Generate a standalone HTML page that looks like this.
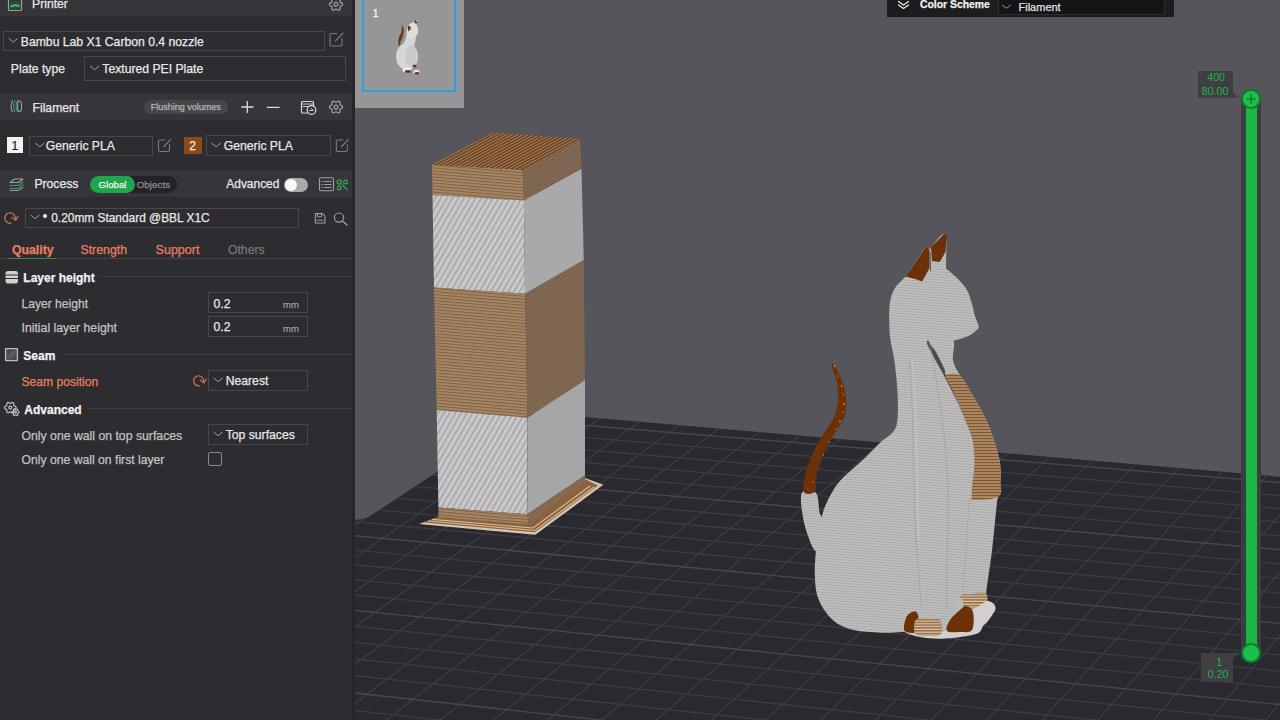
<!DOCTYPE html>
<html><head><meta charset="utf-8"><style>
html,body{margin:0;padding:0;width:1280px;height:720px;overflow:hidden;background:#56555b;position:relative}
.t{position:absolute;white-space:pre;line-height:1.15;font-family:"Liberation Sans", sans-serif;-webkit-text-stroke:0.25px currentColor}
</style></head><body>
<div style="position:absolute;left:355px;top:0px;width:925px;height:720px;background:#56555b"></div>
<svg style="position:absolute;left:0;top:0" width="1280" height="720" viewBox="0 0 1280 720">
<defs><clipPath id="floorclip"><path d="M355,520 L362,519 Q366,518.5 368.25,517.3 L437,472 L530,414 L585.2,417 L1280,476.8 L1280,720 L355,720 Z"/></clipPath></defs>
<path d="M355,520 L362,519 Q366,518.5 368.25,517.3 L437,472 L530,414 L585.2,417 L1280,476.8 L1280,720 L355,720 Z" fill="#2a292f"/>
<g clip-path="url(#floorclip)" stroke-linecap="butt">
<line x1="189.9" y1="381.4" x2="-817.0" y2="958.1" stroke="#3d3c43" stroke-width="1.3"/>
<line x1="226.3" y1="384.3" x2="-770.7" y2="965.2" stroke="#3d3c43" stroke-width="1.3"/>
<line x1="262.9" y1="387.3" x2="-724.0" y2="972.3" stroke="#3d3c43" stroke-width="1.3"/>
<line x1="299.8" y1="390.3" x2="-676.7" y2="979.5" stroke="#3d3c43" stroke-width="1.3"/>
<line x1="337.0" y1="393.3" x2="-629.0" y2="986.8" stroke="#3d3c43" stroke-width="1.3"/>
<line x1="374.5" y1="396.3" x2="-580.8" y2="994.2" stroke="#3d3c43" stroke-width="1.3"/>
<line x1="412.2" y1="399.4" x2="-532.1" y2="1001.6" stroke="#3d3c43" stroke-width="1.3"/>
<line x1="450.2" y1="402.5" x2="-482.8" y2="1009.1" stroke="#3d3c43" stroke-width="1.3"/>
<line x1="488.4" y1="405.6" x2="-433.1" y2="1016.7" stroke="#3d3c43" stroke-width="1.3"/>
<line x1="527.0" y1="408.7" x2="-382.8" y2="1024.4" stroke="#3d3c43" stroke-width="1.3"/>
<line x1="565.8" y1="411.9" x2="-332.1" y2="1032.1" stroke="#3d3c43" stroke-width="1.3"/>
<line x1="604.9" y1="415.0" x2="-280.7" y2="1040.0" stroke="#3d3c43" stroke-width="1.3"/>
<line x1="644.4" y1="418.2" x2="-228.9" y2="1047.9" stroke="#3d3c43" stroke-width="1.3"/>
<line x1="684.1" y1="421.5" x2="-176.4" y2="1055.9" stroke="#3d3c43" stroke-width="1.3"/>
<line x1="724.1" y1="424.7" x2="-123.5" y2="1064.0" stroke="#3d3c43" stroke-width="1.3"/>
<line x1="764.4" y1="428.0" x2="-69.9" y2="1072.2" stroke="#3d3c43" stroke-width="1.3"/>
<line x1="805.0" y1="431.3" x2="-15.7" y2="1080.4" stroke="#3d3c43" stroke-width="1.3"/>
<line x1="845.9" y1="434.6" x2="39.0" y2="1088.8" stroke="#3d3c43" stroke-width="1.3"/>
<line x1="887.1" y1="437.9" x2="94.3" y2="1097.2" stroke="#3d3c43" stroke-width="1.3"/>
<line x1="928.6" y1="441.3" x2="150.3" y2="1105.8" stroke="#3d3c43" stroke-width="1.3"/>
<line x1="970.5" y1="444.7" x2="206.8" y2="1114.4" stroke="#3d3c43" stroke-width="1.3"/>
<line x1="1012.7" y1="448.1" x2="264.0" y2="1123.1" stroke="#3d3c43" stroke-width="1.3"/>
<line x1="1055.2" y1="451.6" x2="321.9" y2="1132.0" stroke="#3d3c43" stroke-width="1.3"/>
<line x1="1098.0" y1="455.1" x2="380.4" y2="1140.9" stroke="#3d3c43" stroke-width="1.3"/>
<line x1="1141.1" y1="458.6" x2="439.6" y2="1149.9" stroke="#3d3c43" stroke-width="1.3"/>
<line x1="1184.6" y1="462.1" x2="499.4" y2="1159.1" stroke="#3d3c43" stroke-width="1.3"/>
<line x1="1228.5" y1="465.6" x2="559.9" y2="1168.3" stroke="#3d3c43" stroke-width="1.3"/>
<line x1="1272.6" y1="469.2" x2="621.2" y2="1177.7" stroke="#3d3c43" stroke-width="1.3"/>
<line x1="1317.2" y1="472.8" x2="683.1" y2="1187.1" stroke="#3d3c43" stroke-width="1.3"/>
<line x1="1362.0" y1="476.5" x2="745.8" y2="1196.7" stroke="#3d3c43" stroke-width="1.3"/>
<line x1="1407.3" y1="480.2" x2="809.2" y2="1206.4" stroke="#3d3c43" stroke-width="1.3"/>
<line x1="1452.9" y1="483.9" x2="873.3" y2="1216.1" stroke="#3d3c43" stroke-width="1.3"/>
<line x1="1498.8" y1="487.6" x2="938.3" y2="1226.1" stroke="#3d3c43" stroke-width="1.3"/>
<line x1="1545.2" y1="491.3" x2="1004.0" y2="1236.1" stroke="#3d3c43" stroke-width="1.3"/>
<line x1="1591.9" y1="495.1" x2="1070.5" y2="1246.2" stroke="#3d3c43" stroke-width="1.3"/>
<line x1="1639.0" y1="499.0" x2="1137.7" y2="1256.5" stroke="#3d3c43" stroke-width="1.3"/>
<line x1="1686.4" y1="502.8" x2="1205.9" y2="1266.9" stroke="#3d3c43" stroke-width="1.3"/>
<line x1="1734.3" y1="506.7" x2="1274.8" y2="1277.4" stroke="#3d3c43" stroke-width="1.3"/>
<line x1="1782.5" y1="510.6" x2="1344.6" y2="1288.1" stroke="#3d3c43" stroke-width="1.3"/>
<line x1="1831.2" y1="514.5" x2="1415.3" y2="1298.9" stroke="#3d3c43" stroke-width="1.3"/>
<line x1="1880.2" y1="518.5" x2="1486.9" y2="1309.8" stroke="#3d3c43" stroke-width="1.3"/>
<line x1="1929.7" y1="522.5" x2="1559.3" y2="1320.9" stroke="#3d3c43" stroke-width="1.3"/>
<line x1="172.3" y1="391.4" x2="2500.8" y2="583.0" stroke="#4a4950" stroke-width="1.3"/>
<line x1="154.5" y1="401.6" x2="2499.5" y2="597.2" stroke="#3d3c43" stroke-width="1.3"/>
<line x1="136.5" y1="411.9" x2="2498.1" y2="611.7" stroke="#3d3c43" stroke-width="1.3"/>
<line x1="118.2" y1="422.4" x2="2496.8" y2="626.5" stroke="#3d3c43" stroke-width="1.3"/>
<line x1="99.6" y1="433.1" x2="2495.4" y2="641.5" stroke="#3d3c43" stroke-width="1.3"/>
<line x1="80.7" y1="443.9" x2="2494.0" y2="656.8" stroke="#4a4950" stroke-width="1.3"/>
<line x1="61.6" y1="454.9" x2="2492.6" y2="672.4" stroke="#3d3c43" stroke-width="1.3"/>
<line x1="42.1" y1="466.0" x2="2491.1" y2="688.2" stroke="#3d3c43" stroke-width="1.3"/>
<line x1="22.4" y1="477.3" x2="2489.6" y2="704.4" stroke="#3d3c43" stroke-width="1.3"/>
<line x1="2.4" y1="488.8" x2="2488.1" y2="720.9" stroke="#3d3c43" stroke-width="1.3"/>
<line x1="-18.0" y1="500.4" x2="2486.6" y2="737.7" stroke="#4a4950" stroke-width="1.3"/>
<line x1="-38.6" y1="512.2" x2="2485.0" y2="754.8" stroke="#3d3c43" stroke-width="1.3"/>
<line x1="-59.6" y1="524.3" x2="2483.4" y2="772.3" stroke="#3d3c43" stroke-width="1.3"/>
<line x1="-80.9" y1="536.5" x2="2481.8" y2="790.1" stroke="#3d3c43" stroke-width="1.3"/>
<line x1="-102.5" y1="548.9" x2="2480.1" y2="808.2" stroke="#3d3c43" stroke-width="1.3"/>
<line x1="-124.5" y1="561.5" x2="2478.4" y2="826.7" stroke="#4a4950" stroke-width="1.3"/>
<line x1="-146.9" y1="574.3" x2="2476.7" y2="845.6" stroke="#3d3c43" stroke-width="1.3"/>
<line x1="-169.6" y1="587.3" x2="2474.9" y2="864.9" stroke="#3d3c43" stroke-width="1.3"/>
<line x1="-192.7" y1="600.5" x2="2473.1" y2="884.6" stroke="#3d3c43" stroke-width="1.3"/>
<line x1="-216.1" y1="613.9" x2="2471.3" y2="904.7" stroke="#3d3c43" stroke-width="1.3"/>
<line x1="-240.0" y1="627.6" x2="2469.4" y2="925.3" stroke="#4a4950" stroke-width="1.3"/>
<line x1="-264.2" y1="641.5" x2="2467.5" y2="946.2" stroke="#3d3c43" stroke-width="1.3"/>
<line x1="-288.9" y1="655.6" x2="2465.5" y2="967.7" stroke="#3d3c43" stroke-width="1.3"/>
<line x1="-314.0" y1="670.0" x2="2463.5" y2="989.6" stroke="#3d3c43" stroke-width="1.3"/>
<line x1="-339.5" y1="684.6" x2="2461.4" y2="1012.0" stroke="#3d3c43" stroke-width="1.3"/>
<line x1="-365.4" y1="699.4" x2="2459.3" y2="1034.8" stroke="#4a4950" stroke-width="1.3"/>
<line x1="-391.9" y1="714.6" x2="2457.2" y2="1058.3" stroke="#3d3c43" stroke-width="1.3"/>
<line x1="-418.7" y1="730.0" x2="2455.0" y2="1082.2" stroke="#3d3c43" stroke-width="1.3"/>
<line x1="-446.1" y1="745.6" x2="2452.7" y2="1106.7" stroke="#3d3c43" stroke-width="1.3"/>
<line x1="-473.9" y1="761.6" x2="2450.4" y2="1131.8" stroke="#3d3c43" stroke-width="1.3"/>
<line x1="-502.3" y1="777.8" x2="2448.1" y2="1157.5" stroke="#4a4950" stroke-width="1.3"/>
<line x1="-531.2" y1="794.4" x2="2445.7" y2="1183.8" stroke="#3d3c43" stroke-width="1.3"/>
<line x1="-560.6" y1="811.2" x2="2443.2" y2="1210.7" stroke="#3d3c43" stroke-width="1.3"/>
<line x1="-590.6" y1="828.4" x2="2440.7" y2="1238.3" stroke="#3d3c43" stroke-width="1.3"/>
<line x1="-621.1" y1="845.9" x2="2438.1" y2="1266.6" stroke="#3d3c43" stroke-width="1.3"/>
<line x1="-652.2" y1="863.7" x2="2435.4" y2="1295.6" stroke="#4a4950" stroke-width="1.3"/>
<line x1="-683.9" y1="881.9" x2="2432.7" y2="1325.4" stroke="#3d3c43" stroke-width="1.3"/>
<line x1="-716.2" y1="900.4" x2="2429.9" y2="1355.9" stroke="#3d3c43" stroke-width="1.3"/>
<line x1="-749.2" y1="919.2" x2="2427.0" y2="1387.2" stroke="#3d3c43" stroke-width="1.3"/>
<line x1="-782.8" y1="938.5" x2="2424.1" y2="1419.4" stroke="#3d3c43" stroke-width="1.3"/>
</g>
<defs>
<pattern id="whitestripe" patternUnits="userSpaceOnUse" width="5" height="5" patternTransform="rotate(30)">
  <rect width="5" height="5" fill="#c9c9cb"/><rect width="1.8" height="5" fill="#a9a9ac"/>
</pattern>
<pattern id="brownstripe" patternUnits="userSpaceOnUse" width="4" height="3" patternTransform="rotate(5)">
  <rect width="4" height="3" fill="#a88764"/><rect width="4" height="1.1" fill="#7f6248"/>
</pattern>
<pattern id="brownstripeR" patternUnits="userSpaceOnUse" width="4" height="3" patternTransform="rotate(-30)">
  <rect width="4" height="3" fill="#846b55"/><rect width="4" height="1" fill="#735c48"/>
</pattern>
<pattern id="topstripe" patternUnits="userSpaceOnUse" width="3" height="2.6" patternTransform="rotate(-28)">
  <rect width="3" height="2.6" fill="#6e4524"/><rect width="3" height="0.8" fill="#b48a62"/>
</pattern>
<pattern id="catband" patternUnits="userSpaceOnUse" width="4" height="3">
  <rect width="4" height="3" fill="#b08860"/><rect width="4" height="1.1" fill="#7a5838"/>
</pattern>
<pattern id="catw" patternUnits="userSpaceOnUse" width="6" height="2.6" patternTransform="rotate(4)">
  <rect width="6" height="2.6" fill="#bebebe"/><rect width="6" height="0.9" fill="#a9a9a9"/>
</pattern>
<pattern id="footband" patternUnits="userSpaceOnUse" width="4" height="2.8">
  <rect width="4" height="2.8" fill="#d9c6ad"/><rect width="4" height="1.5" fill="#94693f"/>
</pattern>
</defs>
<polygon points="419,524 535.3,534.8 603.3,484.8 585,478 528.75,524 438.4,517" fill="#d2c6b6" />
<polygon points="424,522.5 535,532.3 598,485.5 585,479 528.75,524 438.4,517" fill="#8a623e" />
<polyline points="428,521 535,530.5 594,487" fill="none" stroke="#d9b890" stroke-width="1.2"/>
<polyline points="432,519.3 533,528 590,486" fill="none" stroke="#d9b890" stroke-width="1.2"/>
<polygon points="432,164.5 522.5,170 524,200.5 432.5,195" fill="url(#brownstripe)" />
<polygon points="432.5,195 524,200.5 525,293.75 434,287.5" fill="url(#whitestripe)" />
<polygon points="434,287.5 525,293.75 527.5,417.7 436.7,410" fill="url(#brownstripe)" />
<polygon points="436.7,410 527.5,417.7 527.5,514.2 438.4,507.5" fill="url(#whitestripe)" />
<polygon points="438.4,507.5 527.5,514.2 528.75,524 438.4,517" fill="url(#brownstripe)" />
<polygon points="522.5,170 580,138.75 581.5,168.75 524,200.5" fill="url(#brownstripeR)" />
<polygon points="524,200.5 581.5,168.75 583.75,260 525,293.75" fill="#a9a9ab" />
<polygon points="525,293.75 583.75,260 585,380 527.5,417.7" fill="url(#brownstripeR)" />
<polygon points="527.5,417.7 585,380 585,475.5 527.5,514.2" fill="#a6a6a8" />
<polygon points="527.5,514.2 585,475.5 585,481 528.75,524" fill="#86694e" />
<polygon points="432,164.5 493.75,132.5 580,138.75 522.5,170" fill="url(#topstripe)" />
<path d="M927,339 L937,339 L947,376 L943,376 Z" fill="#4b4a50"/>
<path d="M929.0,339.0 C926.2,341.2 933.5,347.2 936.0,352.0 C938.5,356.8 942.3,364.1 944.0,368.0 C945.7,371.9 944.5,371.9 946.0,375.6 C947.5,379.3 951.0,385.6 953.0,390.0 C955.0,394.4 956.3,398.0 958.0,402.0 C959.7,406.0 961.7,407.7 963.0,414.0 C964.3,420.3 965.7,429.0 966.0,440.0 C966.3,451.0 965.7,466.7 965.0,480.0 C964.3,493.3 964.2,506.7 962.0,520.0 C959.8,533.3 954.0,547.3 952.0,560.0 C950.0,572.7 948.7,587.3 950.0,596.0 C951.3,604.7 954.0,609.3 960.0,612.0 C966.0,614.7 981.6,615.1 986.0,612.0 C990.4,608.9 985.2,603.5 986.2,593.3 C987.2,583.1 990.2,565.5 992.0,550.8 C993.8,536.1 995.7,514.0 996.7,505.0 C997.7,496.0 997.4,501.2 998.0,497.0 C998.6,492.8 1000.2,486.2 1000.5,480.0 C1000.8,473.8 1000.8,467.1 999.5,460.0 C998.2,452.9 995.4,444.6 993.0,437.5 C990.6,430.4 988.4,424.6 985.0,417.5 C981.6,410.4 976.7,402.0 972.5,395.0 C968.3,388.0 963.2,381.4 960.0,375.6 C956.8,369.8 954.2,366.1 953.0,360.0 C951.8,353.9 956.5,342.5 952.5,339.0 C948.5,335.5 931.8,336.8 929.0,339.0 Z" fill="url(#catw)" />
<path d="M946.0,375.6 C944.8,378.0 951.0,385.6 953.0,390.0 C955.0,394.4 956.3,398.0 958.0,402.0 C959.7,406.0 961.7,407.7 963.0,414.0 C964.3,420.3 965.7,429.0 966.0,440.0 C966.3,451.0 965.2,470.2 965.0,480.0 C964.8,489.8 959.5,495.7 965.0,498.5 C970.5,501.3 992.1,500.1 998.0,497.0 C1003.9,493.9 1000.2,486.2 1000.5,480.0 C1000.8,473.8 1000.8,467.1 999.5,460.0 C998.2,452.9 995.4,444.6 993.0,437.5 C990.6,430.4 988.4,424.6 985.0,417.5 C981.6,410.4 976.7,402.0 972.5,395.0 C968.3,388.0 964.4,378.8 960.0,375.6 C955.6,372.4 947.2,373.2 946.0,375.6 Z" fill="url(#catband)" />
<path d="M960.0,596.0 C962.2,593.0 968.6,594.5 973.0,594.0 C977.4,593.5 984.0,590.3 986.2,593.3 C988.4,596.3 988.2,608.7 986.0,612.0 C983.8,615.3 977.3,613.0 973.0,613.0 C968.7,613.0 962.2,614.8 960.0,612.0 C957.8,609.2 957.8,599.0 960.0,596.0 Z" fill="url(#footband)" />
<polygon points="944,598 963,598 963,618 944,626" fill="#b9b9b9" />
<path d="M904.0,630.0 C902.3,632.5 913.2,635.6 920.0,637.0 C926.8,638.4 935.7,639.0 945.0,638.5 C954.3,638.0 969.7,636.1 976.0,634.0 C982.3,631.9 981.0,628.2 983.0,626.0 C985.0,623.8 985.9,624.0 988.0,621.0 C990.1,618.0 995.6,611.3 995.6,608.0 C995.6,604.7 991.4,601.0 988.0,601.0 C984.6,601.0 979.7,606.2 975.0,608.0 C970.3,609.8 967.5,609.7 960.0,612.0 C952.5,614.3 939.3,619.0 930.0,622.0 C920.7,625.0 905.7,627.5 904.0,630.0 Z" fill="#d2d0ce" />
<path d="M905.7,276.4 C903.9,278.3 897.6,283.8 895.0,288.0 C892.4,292.2 891.1,296.2 890.1,301.7 C889.1,307.2 889.1,314.6 889.2,321.0 C889.3,327.4 889.6,333.4 890.5,340.0 C891.4,346.6 893.2,352.1 894.4,360.8 C895.6,369.5 897.0,382.3 897.5,392.0 C898.0,401.7 898.2,412.4 897.5,419.0 C896.8,425.6 896.1,427.9 893.3,431.7 C890.5,435.5 885.3,437.8 880.8,442.0 C876.3,446.2 871.1,452.0 866.2,456.7 C861.4,461.4 856.2,465.4 851.4,470.0 C846.6,474.6 841.5,478.3 837.2,484.2 C832.9,490.1 828.4,498.3 825.4,505.4 C822.4,512.5 821.1,519.1 819.5,526.6 C817.9,534.1 816.8,542.3 816.0,550.2 C815.2,558.1 814.6,566.3 814.8,573.8 C815.0,581.3 815.3,588.7 817.1,595.0 C818.9,601.3 822.0,606.9 825.4,611.6 C828.8,616.3 832.1,620.2 837.2,623.4 C842.3,626.5 848.1,628.9 856.0,630.5 C863.9,632.1 876.2,632.5 884.4,632.8 C892.6,633.0 895.7,631.8 905.0,632.0 C914.3,632.2 931.4,638.5 940.0,634.0 C948.6,629.5 952.8,618.9 956.7,605.0 C960.7,591.1 961.7,565.0 963.7,550.8 C965.7,536.6 967.7,528.1 968.9,520.0 C970.1,511.9 970.5,508.1 971.1,502.2 C971.7,496.3 971.7,490.7 972.2,484.4 C972.8,478.1 974.4,471.8 974.4,464.4 C974.4,457.0 974.1,447.4 972.5,440.0 C970.9,432.6 967.1,425.4 965.0,420.0 C962.9,414.6 961.9,411.7 960.0,407.5 C958.1,403.3 955.8,399.2 953.8,395.0 C951.7,390.8 949.6,386.7 947.5,382.5 C945.4,378.3 943.5,374.6 941.0,370.0 C938.5,365.4 934.8,359.8 932.5,355.0 C930.2,350.2 925.5,343.2 927.0,341.0 C928.5,338.8 937.3,341.6 941.7,341.5 C946.1,341.4 948.8,341.6 953.3,340.6 C957.8,339.6 965.0,337.5 968.9,335.7 C972.8,333.9 975.1,331.6 976.7,330.0 C978.3,328.4 978.9,328.4 978.6,326.0 C978.3,323.6 975.8,319.0 974.7,315.3 C973.6,311.6 973.1,307.8 971.8,303.6 C970.5,299.4 969.4,294.2 967.0,290.0 C964.6,285.8 960.7,281.9 957.2,278.3 C953.7,274.7 947.9,270.2 946.0,268.6  L946.5,240 L945.5,232.6 L940,236.5 L931,247.2 L929.5,250 L927,245.3 L922,252 Z" fill="url(#catw)" />
<path d="M801.8,493.0 C799.6,497.0 801.8,509.6 803.0,517.2 C804.2,524.8 806.9,532.9 808.9,538.4 C810.9,543.9 813.1,548.9 815.0,550.5 C816.9,552.1 818.9,553.1 820.0,548.0 C821.1,542.9 822.0,525.5 821.9,519.6 C821.8,513.7 820.5,516.9 819.5,512.5 C818.5,508.1 819.0,496.2 816.0,493.0 C813.0,489.8 804.0,489.0 801.8,493.0 Z" fill="url(#catw)" />
<path d="M833.8,364.4 C835.1,365.9 838.1,371.1 840.0,375.8 C841.9,380.5 844.2,386.9 845.2,392.5 C846.2,398.1 846.8,404.3 846.2,409.2 C845.7,414.1 844.4,416.8 842.0,421.7 C839.6,426.6 834.8,432.8 831.7,438.3 C828.6,443.9 825.8,449.1 823.3,455.0 C820.8,460.9 818.4,467.7 817.0,473.8 C815.6,479.8 817.2,488.5 815.0,491.5 C812.8,494.5 804.9,495.1 803.5,491.5 C802.1,487.9 805.1,476.0 806.7,469.6 C808.3,463.2 810.1,458.8 812.9,452.9 C815.7,447.0 819.8,440.1 823.3,434.2 C826.8,428.3 831.3,423.1 833.8,417.5 C836.2,411.9 837.4,406.7 837.9,400.8 C838.4,394.9 837.9,387.7 836.9,382.0 C835.9,376.3 832.2,369.4 831.7,366.5 C831.2,363.6 832.4,362.8 833.8,364.4 Z" fill="#6d3107" />
<circle cx="834.5" cy="366" r="0.64" fill="#e2d2bf"/>
<circle cx="838" cy="376" r="0.56" fill="#e2d2bf"/>
<circle cx="841.5" cy="386" r="0.64" fill="#e2d2bf"/>
<circle cx="843.5" cy="395" r="0.56" fill="#e2d2bf"/>
<circle cx="844" cy="404" r="0.64" fill="#e2d2bf"/>
<circle cx="843" cy="412" r="0.56" fill="#e2d2bf"/>
<circle cx="840" cy="421" r="0.64" fill="#e2d2bf"/>
<circle cx="836" cy="429" r="0.56" fill="#e2d2bf"/>
<circle cx="829" cy="442" r="0.56" fill="#e2d2bf"/>
<circle cx="823.5" cy="455" r="0.56" fill="#e2d2bf"/>
<circle cx="819" cy="468" r="0.48" fill="#e2d2bf"/>
<circle cx="813" cy="482" r="0.56" fill="#e2d2bf"/>
<circle cx="808" cy="489" r="0.48" fill="#e2d2bf"/>
<circle cx="842" cy="392" r="0.40" fill="#e2d2bf"/>
<circle cx="839" cy="400" r="0.40" fill="#e2d2bf"/>
<path d="M927,245.3 L929.5,251 L929.5,268 L922.2,281.5 Q913,278 905.7,276.4 Z" fill="#6d3107"/>
<path d="M945.5,232.6 L946.8,238 L945.5,252 L939.7,262 L932,261 L931,247.2 Z" fill="#6d3107"/>
<path d="M930,252 L930.5,271" stroke="#5a5a5e" stroke-width="1.2"/>
<path d="M904.7,631.0 C902.7,628.8 904.8,621.2 906.0,618.0 C907.2,614.8 910.0,612.7 912.0,612.0 C914.0,611.3 916.7,610.8 917.7,614.0 C918.7,617.2 920.2,628.2 918.0,631.0 C915.8,633.8 906.7,633.2 904.7,631.0 Z" fill="#6d3107" />
<path d="M915.6,620.0 C917.7,617.3 923.9,618.1 928.0,618.0 C932.1,617.9 937.8,616.8 940.0,619.5 C942.2,622.2 943.0,631.2 941.0,634.0 C939.0,636.8 932.2,636.0 928.0,636.0 C923.8,636.0 917.7,636.7 915.6,634.0 C913.5,631.3 913.5,622.7 915.6,620.0 Z" fill="url(#footband)" />
<path d="M947.0,631.0 C945.3,629.0 947.8,623.5 950.0,620.0 C952.2,616.5 957.3,612.3 960.0,610.0 C962.7,607.7 963.8,605.7 966.0,606.0 C968.2,606.3 972.0,608.0 973.0,612.0 C974.0,616.0 974.2,626.7 972.0,630.0 C969.8,633.3 964.2,631.8 960.0,632.0 C955.8,632.2 948.7,633.0 947.0,631.0 Z" fill="#6d3107" />
<path d="M909,357 C915,420 912,480 916,540 C918,570 920,590 921.7,607" fill="none" stroke="#9a9a9c" stroke-width="1.1" opacity="0.55"/>
<path d="M930,342 C940,400 950,460 948,520 C947,560 946,590 946.7,607" fill="none" stroke="#9a9a9c" stroke-width="1.1" opacity="0.55"/>
<path d="M969,500 C967,540 964,580 962,600" fill="none" stroke="#a2a2a4" stroke-width="1" opacity="0.7"/>
<path d="M912,360 C918,420 916,480 919,540" fill="none" stroke="#d4d4d6" stroke-width="0.8" opacity="0.6"/>
</svg>
<div style="position:absolute;left:0px;top:0px;width:355px;height:720px;background:#2d2c31"></div>
<div style="position:absolute;left:0px;top:0px;width:352px;height:16px;background:#36353a"></div>
<div style="position:absolute;left:0px;top:94px;width:352px;height:26px;background:#36353a"></div>
<div style="position:absolute;left:0px;top:171px;width:352px;height:26px;background:#36353a"></div>
<div style="position:absolute;left:352px;top:0px;width:3px;height:720px;background:#252428"></div>
<div class="t" style="left:32.00px;top:-2.94px;font-size:12.2px;font-weight:normal;color:#e8e8e8;">Printer</div>
<div style="position:absolute;left:3px;top:31px;width:322px;height:19.5px;border:1px solid #48474c;box-sizing:border-box"></div>
<div class="t" style="left:20.80px;top:34.56px;font-size:12.2px;font-weight:normal;color:#e8e8e8;">Bambu Lab X1 Carbon 0.4 nozzle</div>
<div class="t" style="left:10.80px;top:61.96px;font-size:12.2px;font-weight:normal;color:#e8e8e8;">Plate type</div>
<div style="position:absolute;left:84px;top:56px;width:262px;height:25px;border:1px solid #48474c;box-sizing:border-box"></div>
<div class="t" style="left:102.30px;top:61.76px;font-size:12.2px;font-weight:normal;color:#e8e8e8;">Textured PEI Plate</div>
<div class="t" style="left:32.50px;top:100.96px;font-size:12.2px;font-weight:normal;color:#e8e8e8;">Filament</div>
<div style="position:absolute;left:144px;top:100px;width:84px;height:14px;background:#47464b;border-radius:7px"></div>
<div class="t" style="left:150.70px;top:101.81px;font-size:9.0px;font-weight:normal;color:#b5b5b8;">Flushing volumes</div>
<div style="position:absolute;left:7px;top:137px;width:16px;height:16px;background:#f2f2f2"></div>
<div class="t" style="left:11.60px;top:139.54px;font-size:12px;font-weight:normal;color:#1a1a1a;-webkit-text-stroke:0.2px #1a1a1a">1</div>
<div style="position:absolute;left:29px;top:136px;width:124px;height:20px;border:1px solid #48474c;box-sizing:border-box"></div>
<div class="t" style="left:45.80px;top:139.26px;font-size:12.2px;font-weight:normal;color:#e8e8e8;">Generic PLA</div>
<div style="position:absolute;left:184px;top:137px;width:18px;height:17px;background:#8c4a17"></div>
<div class="t" style="left:189.30px;top:139.54px;font-size:12px;font-weight:normal;color:#f6e8da;">2</div>
<div style="position:absolute;left:206px;top:135px;width:125px;height:21px;border:1px solid #48474c;box-sizing:border-box"></div>
<div class="t" style="left:223.80px;top:139.36px;font-size:12.2px;font-weight:normal;color:#e8e8e8;">Generic PLA</div>
<div class="t" style="left:34.40px;top:177.26px;font-size:12.2px;font-weight:normal;color:#e8e8e8;">Process</div>
<div style="position:absolute;left:90px;top:176px;width:87px;height:17px;background:#232226;border-radius:9px"></div>
<div style="position:absolute;left:90px;top:176px;width:45px;height:17px;background:#1fa54b;border-radius:9px"></div>
<div class="t" style="left:98.50px;top:178.86px;font-size:9.7px;font-weight:normal;color:#f0f0f0;">Global</div>
<div class="t" style="left:136.70px;top:178.68px;font-size:9.9px;font-weight:normal;color:#8d8c90;">Objects</div>
<div class="t" style="left:226.30px;top:177.74px;font-size:11.95px;font-weight:normal;color:#e8e8e8;">Advanced</div>
<div style="position:absolute;left:284px;top:177.5px;width:24px;height:14px;background:#a9a9ab;border-radius:7px"></div>
<div style="position:absolute;left:284.5px;top:178.5px;width:12px;height:12px;background:#fafafa;border-radius:6px"></div>
<div style="position:absolute;left:25px;top:208px;width:274px;height:20px;border:1px solid #48474c;box-sizing:border-box"></div>
<div style="position:absolute;left:43px;top:214px;width:4px;height:4px;background:#eee;border-radius:2px"></div>
<div class="t" style="left:51.25px;top:211.53px;font-size:11.9px;font-weight:normal;color:#e8e8e8;">0.20mm Standard @BBL X1C</div>
<div class="t" style="left:11.90px;top:243.37px;font-size:12.3px;font-weight:bold;color:#e8805e;">Quality</div>
<div class="t" style="left:80.50px;top:243.37px;font-size:12.3px;font-weight:normal;color:#e8805e;">Strength</div>
<div class="t" style="left:155.60px;top:243.18px;font-size:12.5px;font-weight:normal;color:#e8805e;">Support</div>
<div class="t" style="left:228.00px;top:243.46px;font-size:12.2px;font-weight:normal;color:#77767b;">Others</div>
<div style="position:absolute;left:0px;top:258px;width:352px;height:1px;background:#46454a"></div>
<div style="position:absolute;left:9px;top:258px;width:47px;height:1px;background:#2f8a4c"></div>
<div class="t" style="left:23.30px;top:271.94px;font-size:12.0px;font-weight:bold;color:#f2f2f2;">Layer height</div>
<div style="position:absolute;left:99px;top:276px;width:253px;height:1px;background:#3f3e43"></div>
<div class="t" style="left:21.50px;top:298.05px;font-size:12.1px;font-weight:normal;color:#c2c2c4;">Layer height</div>
<div style="position:absolute;left:208px;top:292px;width:100px;height:21px;border:1px solid #48474c;box-sizing:border-box"></div>
<div class="t" style="left:213.50px;top:296.56px;font-size:12.2px;font-weight:normal;color:#e8e8e8;">0.2</div>
<div class="t" style="left:283.00px;top:300.45px;font-size:9.5px;font-weight:normal;color:#9a9a9d;">mm</div>
<div class="t" style="left:21.50px;top:321.49px;font-size:12.27px;font-weight:normal;color:#c2c2c4;">Initial layer height</div>
<div style="position:absolute;left:208px;top:316px;width:100px;height:21px;border:1px solid #48474c;box-sizing:border-box"></div>
<div class="t" style="left:213.50px;top:320.26px;font-size:12.2px;font-weight:normal;color:#e8e8e8;">0.2</div>
<div class="t" style="left:283.00px;top:324.15px;font-size:9.5px;font-weight:normal;color:#9a9a9d;">mm</div>
<div class="t" style="left:23.30px;top:349.74px;font-size:12.0px;font-weight:bold;color:#f2f2f2;">Seam</div>
<div style="position:absolute;left:62px;top:354px;width:290px;height:1px;background:#3f3e43"></div>
<div class="t" style="left:21.50px;top:376.25px;font-size:12.1px;font-weight:normal;color:#e8805e;">Seam position</div>
<div style="position:absolute;left:208px;top:370px;width:100px;height:21px;border:1px solid #48474c;box-sizing:border-box"></div>
<div class="t" style="left:225.70px;top:373.76px;font-size:12.2px;font-weight:normal;color:#e8e8e8;">Nearest</div>
<div class="t" style="left:24.30px;top:403.74px;font-size:12.0px;font-weight:bold;color:#f2f2f2;">Advanced</div>
<div style="position:absolute;left:87px;top:408px;width:265px;height:1px;background:#3f3e43"></div>
<div class="t" style="left:21.50px;top:429.10px;font-size:12.26px;font-weight:normal;color:#c2c2c4;">Only one wall on top surfaces</div>
<div style="position:absolute;left:208px;top:424px;width:100px;height:21px;border:1px solid #48474c;box-sizing:border-box"></div>
<div class="t" style="left:225.70px;top:427.76px;font-size:12.2px;font-weight:normal;color:#e8e8e8;">Top surfaces</div>
<div class="t" style="left:21.50px;top:452.86px;font-size:12.2px;font-weight:normal;color:#c2c2c4;">Only one wall on first layer</div>
<div style="position:absolute;left:208px;top:452px;width:14px;height:14px;border:1px solid #8a898e;box-sizing:border-box;border-radius:2px"></div>
<svg style="position:absolute;left:0;top:0" width="356" height="720" fill="none" stroke-linecap="round" stroke-linejoin="round">
<path d="M8.5,-3 L8.5,9.5 Q8.5,10.5 9.5,10.5 L20.5,10.5 Q21.5,10.5 21.5,9.5 L21.5,-3" stroke="#9f9fa3" stroke-width="1.2"/>
<rect x="10.5" y="2" width="9" height="6.5" fill="#1f5a30"/><path d="M11,6.5 Q15,4.5 19,6" stroke="#5fbf7a" stroke-width="1.5"/>
<path d="M342.60,4.30 342.52,4.73 342.28,5.13 341.91,5.48 341.48,5.77 341.04,6.01 340.64,6.22 340.33,6.43 340.12,6.68 340.01,6.98 339.98,7.36 340.00,7.81 340.01,8.31 339.98,8.83 339.85,9.32 339.63,9.73 339.30,10.02 338.89,10.16 338.42,10.15 337.94,10.01 337.47,9.78 337.04,9.52 336.66,9.28 336.32,9.11 336.00,9.05 335.68,9.11 335.34,9.28 334.96,9.52 334.53,9.78 334.06,10.01 333.58,10.15 333.11,10.16 332.70,10.02 332.37,9.73 332.15,9.32 332.02,8.83 331.99,8.31 332.00,7.81 332.02,7.36 331.99,6.98 331.88,6.68 331.67,6.43 331.36,6.22 330.96,6.01 330.52,5.77 330.09,5.48 329.72,5.13 329.48,4.73 329.40,4.30 329.48,3.87 329.72,3.47 330.09,3.12 330.52,2.83 330.96,2.59 331.36,2.38 331.67,2.17 331.88,1.92 331.99,1.62 332.02,1.24 332.00,0.79 331.99,0.29 332.02,-0.23 332.15,-0.72 332.37,-1.13 332.70,-1.42 333.11,-1.56 333.58,-1.55 334.06,-1.41 334.53,-1.18 334.96,-0.92 335.34,-0.68 335.68,-0.51 336.00,-0.45 336.32,-0.51 336.66,-0.68 337.04,-0.92 337.47,-1.18 337.94,-1.41 338.42,-1.55 338.89,-1.56 339.30,-1.42 339.63,-1.13 339.85,-0.72 339.98,-0.23 340.01,0.29 340.00,0.79 339.98,1.24 340.01,1.62 340.12,1.92 340.33,2.17 340.64,2.38 341.04,2.59 341.48,2.83 341.91,3.12 342.28,3.47 342.52,3.87Z" stroke="#9f9fa3" stroke-width="1.3"/><circle cx="336" cy="4.3" r="1.9" stroke="#9f9fa3" stroke-width="1.3"/>
<path d="M342.60,107.00 342.52,107.43 342.28,107.83 341.91,108.18 341.48,108.47 341.04,108.71 340.64,108.92 340.33,109.13 340.12,109.38 340.01,109.68 339.98,110.06 340.00,110.51 340.01,111.01 339.98,111.53 339.85,112.02 339.63,112.43 339.30,112.72 338.89,112.86 338.42,112.85 337.94,112.71 337.47,112.48 337.04,112.22 336.66,111.98 336.32,111.81 336.00,111.75 335.68,111.81 335.34,111.98 334.96,112.22 334.53,112.48 334.06,112.71 333.58,112.85 333.11,112.86 332.70,112.72 332.37,112.43 332.15,112.02 332.02,111.53 331.99,111.01 332.00,110.51 332.02,110.06 331.99,109.68 331.88,109.38 331.67,109.13 331.36,108.92 330.96,108.71 330.52,108.47 330.09,108.18 329.72,107.83 329.48,107.43 329.40,107.00 329.48,106.57 329.72,106.17 330.09,105.82 330.52,105.53 330.96,105.29 331.36,105.08 331.67,104.87 331.88,104.62 331.99,104.32 332.02,103.94 332.00,103.49 331.99,102.99 332.02,102.47 332.15,101.98 332.37,101.57 332.70,101.28 333.11,101.14 333.58,101.15 334.06,101.29 334.53,101.52 334.96,101.78 335.34,102.02 335.68,102.19 336.00,102.25 336.32,102.19 336.66,102.02 337.04,101.78 337.47,101.52 337.94,101.29 338.42,101.15 338.89,101.14 339.30,101.28 339.63,101.57 339.85,101.98 339.98,102.47 340.01,102.99 340.00,103.49 339.98,103.94 340.01,104.32 340.12,104.62 340.33,104.87 340.64,105.08 341.04,105.29 341.48,105.53 341.91,105.82 342.28,106.17 342.52,106.57Z" stroke="#9f9fa3" stroke-width="1.3"/><circle cx="336" cy="107" r="1.9" stroke="#9f9fa3" stroke-width="1.3"/>
<path d="M336.925,33.5 L331.5,33.5 Q330.0,33.5 330.0,35.0 L330.0,44.5 Q330.0,46.0 331.5,46.0 L340.5,46.0 Q342.0,46.0 342.0,44.5 L342.0,38.575" stroke="#7c7c80" stroke-width="1.1"/><path d="M335.575,40.87 L343.0,33.0" stroke="#7c7c80" stroke-width="1.1"/>
<path d="M164.875,140 L160,140 Q158.5,140 158.5,141.5 L158.5,150.0 Q158.5,151.5 160,151.5 L168.0,151.5 Q169.5,151.5 169.5,150.0 L169.5,144.625" stroke="#7c7c80" stroke-width="1.1"/><path d="M163.625,146.75 L170.5,139.5" stroke="#7c7c80" stroke-width="1.1"/>
<path d="M342.675,140 L337.8,140 Q336.3,140 336.3,141.5 L336.3,150.0 Q336.3,151.5 337.8,151.5 L345.8,151.5 Q347.3,151.5 347.3,150.0 L347.3,144.625" stroke="#7c7c80" stroke-width="1.1"/><path d="M341.425,146.75 L348.3,139.5" stroke="#7c7c80" stroke-width="1.1"/>
<path d="M12.5,100.8 Q9.5,106.3 12.5,111.8" stroke="#9f9fa3" stroke-width="1.1"/>
<path d="M15,100.8 Q12,106.3 15,111.8" stroke="#3aa05a" stroke-width="1.1"/>
<path d="M17.5,100.8 Q14.5,106.3 17.5,111.8" stroke="#3aa05a" stroke-width="1.1"/>
<ellipse cx="19.6" cy="106.3" rx="2" ry="5.5" stroke="#9f9fa3" stroke-width="1.1"/>
<path d="M241.6,107 L253,107 M247.3,101.5 L247.3,112.5" stroke="#dcdcde" stroke-width="1.3"/>
<path d="M267.5,107.4 L279,107.4" stroke="#dcdcde" stroke-width="1.3"/>
<rect x="301.5" y="101.5" width="12" height="11.5" rx="1" stroke="#d8d8da" stroke-width="1.2"/>
<path d="M302,104 L313,104 M303,106.5 L311,106.5" stroke="#d8d8da" stroke-width="0.9"/>
<circle cx="311.5" cy="110" r="4.3" fill="#333237" stroke="#d8d8da" stroke-width="1.2"/>
<path d="M309.5,110.5 L313,110.5 M311.5,108.5 L313,110.5" stroke="#d8d8da" stroke-width="0.9"/>
<path d="M10,182.5 L14.5,179 L23,179 L18.5,182.5 Z" stroke="#9f9fa3" stroke-width="1.1"/>
<path d="M10,185.5 L18.5,185.5 L23,182" stroke="#3aa05a" stroke-width="1.2"/>
<path d="M10,188.5 L18.5,188.5 L23,185" stroke="#3aa05a" stroke-width="1.2"/>
<path d="M10,190.5 L18.5,190.5 L23,187.5" stroke="#9f9fa3" stroke-width="1"/>
<rect x="319.5" y="177.8" width="14" height="13" rx="1.2" stroke="#9f9fa3" stroke-width="1.1"/>
<path d="M321.8,181.5 L322.6,181.5 M324.5,181.5 L331,181.5" stroke="#9f9fa3" stroke-width="1"/>
<path d="M321.8,184.5 L322.6,184.5 M324.5,184.5 L331,184.5" stroke="#9f9fa3" stroke-width="1"/>
<path d="M321.8,187.5 L322.6,187.5 M324.5,187.5 L331,187.5" stroke="#9f9fa3" stroke-width="1"/>
<circle cx="339.3" cy="182" r="2.1" stroke="#3aa05a" stroke-width="1.3"/><circle cx="345.6" cy="182" r="1.9" stroke="#3aa05a" stroke-width="1.2"/><circle cx="339.3" cy="188" r="1.9" stroke="#3aa05a" stroke-width="1.2"/><path d="M342.5,185 L347,189.5" stroke="#3aa05a" stroke-width="1.4"/>
<path d="M15.139999999999999,219.04 A5.2,5.2 0 1 0 10.719999999999999,223.2" stroke="#bf6e58" stroke-width="1.4"/><path d="M11.76,217.48 L15.66,220.34 L18.0,216.18" stroke="#bf6e58" stroke-width="1.3"/>
<path d="M203.55,381.8 A5.0,5.0 0 1 0 199.3,385.8" stroke="#bf6e58" stroke-width="1.4"/><path d="M200.3,380.3 L204.05,383.05 L206.3,379.05" stroke="#bf6e58" stroke-width="1.3"/>
<path d="M315.3,213.6 L322.5,213.6 L325,216.2 L325,223 L315.3,223 Z" stroke="#9f9fa3" stroke-width="1.1"/><path d="M317.5,213.8 L317.5,216.8 L321.5,216.8 L321.5,213.8 M317,220.2 L323,220.2" stroke="#9f9fa3" stroke-width="1"/>
<circle cx="339" cy="217.6" r="4.6" stroke="#9f9fa3" stroke-width="1.2"/><path d="M342.4,221 L347,225" stroke="#9f9fa3" stroke-width="1.4"/>
<rect x="5.5" y="271" width="12.5" height="12.5" rx="2.5" fill="#d0d0d2"/><path d="M5.5,275 L18,275 M5.5,278.5 L18,278.5" stroke="#2e2d32" stroke-width="1.2"/>
<rect x="5.6" y="348.6" width="11.8" height="12" fill="#4a4a4e" stroke="#bdbdbf" stroke-width="1.3"/><path d="M8,358.5 L15,351.5" stroke="#9a9a9d" stroke-width="1" stroke-dasharray="1.2 1"/><path d="M8,355.5 L12,351.5 M11,358.5 L15,354.5" stroke="#6e6e72" stroke-width="0.8"/>
<path d="M16.10,407.60 16.03,407.98 15.81,408.33 15.50,408.63 15.12,408.89 14.73,409.10 14.38,409.29 14.10,409.47 13.92,409.69 13.82,409.95 13.80,410.29 13.82,410.68 13.83,411.13 13.79,411.58 13.69,412.01 13.49,412.37 13.20,412.62 12.84,412.75 12.43,412.74 12.00,412.62 11.59,412.42 11.21,412.19 10.88,411.98 10.58,411.83 10.30,411.78 10.02,411.83 9.72,411.98 9.39,412.19 9.01,412.42 8.60,412.62 8.17,412.74 7.76,412.75 7.40,412.62 7.11,412.37 6.91,412.01 6.81,411.58 6.77,411.13 6.78,410.68 6.80,410.29 6.78,409.95 6.68,409.69 6.50,409.47 6.22,409.29 5.87,409.10 5.48,408.89 5.10,408.63 4.79,408.33 4.57,407.98 4.50,407.60 4.57,407.22 4.79,406.87 5.10,406.57 5.48,406.31 5.87,406.10 6.22,405.91 6.50,405.73 6.68,405.51 6.78,405.25 6.80,404.91 6.78,404.52 6.77,404.07 6.81,403.62 6.91,403.19 7.11,402.83 7.40,402.58 7.76,402.45 8.17,402.46 8.60,402.58 9.01,402.78 9.39,403.01 9.72,403.22 10.02,403.37 10.30,403.42 10.58,403.37 10.88,403.22 11.21,403.01 11.59,402.78 12.00,402.58 12.43,402.46 12.84,402.45 13.20,402.58 13.49,402.83 13.69,403.19 13.79,403.62 13.83,404.07 13.82,404.52 13.80,404.91 13.82,405.25 13.92,405.51 14.10,405.73 14.38,405.91 14.73,406.10 15.12,406.31 15.50,406.57 15.81,406.87 16.03,407.22Z" stroke="#c4c4c6" stroke-width="1.2"/><circle cx="10.3" cy="407.6" r="1.5" stroke="#c4c4c6" stroke-width="1.2"/>
<path d="M19.20,412.30 19.15,412.53 19.02,412.75 18.83,412.94 18.59,413.10 18.35,413.23 18.13,413.35 17.96,413.46 17.84,413.60 17.79,413.76 17.77,413.97 17.78,414.21 17.79,414.49 17.77,414.77 17.70,415.04 17.58,415.26 17.40,415.42 17.18,415.49 16.92,415.49 16.66,415.41 16.40,415.29 16.17,415.15 15.96,415.02 15.77,414.92 15.60,414.89 15.43,414.92 15.24,415.02 15.03,415.15 14.80,415.29 14.54,415.41 14.28,415.49 14.02,415.49 13.80,415.42 13.62,415.26 13.50,415.04 13.43,414.77 13.41,414.49 13.42,414.21 13.43,413.97 13.41,413.76 13.36,413.60 13.24,413.46 13.07,413.35 12.85,413.23 12.61,413.10 12.37,412.94 12.18,412.75 12.05,412.53 12.00,412.30 12.05,412.07 12.18,411.85 12.37,411.66 12.61,411.50 12.85,411.37 13.07,411.25 13.24,411.14 13.36,411.00 13.41,410.84 13.43,410.63 13.42,410.39 13.41,410.11 13.43,409.83 13.50,409.56 13.62,409.34 13.80,409.18 14.02,409.11 14.28,409.11 14.54,409.19 14.80,409.31 15.03,409.45 15.24,409.58 15.43,409.68 15.60,409.71 15.77,409.68 15.96,409.58 16.17,409.45 16.40,409.31 16.66,409.19 16.92,409.11 17.18,409.11 17.40,409.18 17.58,409.34 17.70,409.56 17.77,409.83 17.79,410.11 17.78,410.39 17.77,410.63 17.79,410.84 17.84,411.00 17.96,411.14 18.13,411.25 18.35,411.37 18.59,411.50 18.83,411.66 19.02,411.85 19.15,412.07Z" stroke="#c4c4c6" stroke-width="1.1"/><circle cx="15.6" cy="412.3" r="0.9" stroke="#c4c4c6" stroke-width="1.1"/>
<path d="M9,38.6 L13.25,42.1 L17.5,38.6" stroke="#a0a0a3" stroke-width="1"/>
<path d="M90.3,66.2 L94.55,69.7 L98.8,66.2" stroke="#a0a0a3" stroke-width="1"/>
<path d="M35.5,143.3 L39.75,146.8 L44.0,143.3" stroke="#a0a0a3" stroke-width="1"/>
<path d="M212,143.3 L216.25,146.8 L220.5,143.3" stroke="#a0a0a3" stroke-width="1"/>
<path d="M30.8,215.2 L35.05,218.7 L39.3,215.2" stroke="#a0a0a3" stroke-width="1"/>
<path d="M213.8,378.2 L218.05,381.7 L222.3,378.2" stroke="#a0a0a3" stroke-width="1"/>
<path d="M213.8,432.2 L218.05,435.7 L222.3,432.2" stroke="#a0a0a3" stroke-width="1"/>
</svg>
<div style="position:absolute;left:355px;top:0px;width:109px;height:108px;background:#969698"></div>
<div style="position:absolute;left:362px;top:-2px;width:94px;height:94px;border:2px solid #2a9fe3;box-sizing:border-box"></div>
<div class="t" style="left:372.50px;top:7.36px;font-size:11px;font-weight:normal;color:#f4f4f4;">1</div>
<svg style="position:absolute;left:380px;top:10px" width="60" height="70">
<path d="M18.5,35 Q17.5,29 20,25 Q22.5,21 21.5,14.5 Q24,17 23.8,22 Q23,28 20.5,32 L20,36 Z" fill="#6a3a1c"/>
<ellipse cx="27" cy="46.5" rx="11" ry="13.5" fill="#d6d6d8"/>
<path d="M27,24 Q25,34 17,42 L30,44 Q36,35 36,25 Z" fill="#d6d6d8"/>
<ellipse cx="31" cy="46" rx="6" ry="10.5" fill="#cacacc"/>
<path d="M27,27 Q31,30 35,27 Q39,24 38,19 Q37,15 36,13.5 L37.5,10 L34.5,12 Q30,12.5 28,16 Q26,20 27,27 Z" fill="#dcdcdd"/>
<path d="M28,15.5 Q27.5,19 28.5,21.5 Q30.5,20 31,18 Q30.5,15.5 28,15.5 Z" fill="#6a3a1c"/>
<path d="M35,9.5 L37.8,13 L34.5,13.5 Z" fill="#6a3a1c"/>
<ellipse cx="27" cy="60" rx="4.5" ry="2.5" fill="#ececec"/>
<ellipse cx="28" cy="61.5" rx="3.2" ry="1.4" fill="#6a3a1c"/>
<ellipse cx="36.5" cy="62" rx="3.2" ry="2.2" fill="#e4e4e4"/>
<ellipse cx="37" cy="63.3" rx="2.4" ry="1.3" fill="#6a3a1c"/>
<ellipse cx="34.5" cy="56" rx="2" ry="1.6" fill="#6a3a1c"/>
</svg>
<div style="position:absolute;left:887px;top:0px;width:287px;height:17px;background:#1d1d20"></div>
<div class="t" style="left:920.00px;top:-0.78px;font-size:10.4px;font-weight:bold;color:#f0f0f0;">Color Scheme</div>
<div style="position:absolute;left:998px;top:-1px;width:167px;height:16px;background:#151517;border:1px solid #2e2e31;box-sizing:border-box"></div>
<div class="t" style="left:1018.50px;top:0.66px;font-size:11.0px;font-weight:normal;color:#e0e0e0;">Filament</div>
<svg style="position:absolute;left:885px;top:0" width="140" height="18" fill="none" stroke-linecap="round" stroke-linejoin="round"><path d="M13.5,1.5 L18.5,5 L23.5,1.5 M13.5,5 L18.5,8.5 L23.5,5" stroke="#e8e8e8" stroke-width="1.3"/><path d="M117.5,5.2 L121.5,8.3 L125.5,5.2" stroke="#9a9a9c" stroke-width="1"/></svg>
<div style="position:absolute;left:1241px;top:89px;width:20px;height:574px;background:#3d3c42;border-radius:10px"></div>
<div style="position:absolute;left:1245.5px;top:98px;width:11px;height:555px;background:#19b845"></div>
<div style="position:absolute;left:1241px;top:88.75px;width:20px;height:20px;border-radius:10px;background:#0f7a2f"></div>
<div style="position:absolute;left:1242.75px;top:90.5px;width:16.5px;height:16.5px;border-radius:9px;background:#1cbf49"></div>
<svg style="position:absolute;left:1241px;top:88.75px" width="20" height="20"><path d="M10,5 L10,15 M5,10 L15,10" stroke="#0d6a28" stroke-width="1.1"/></svg>
<div style="position:absolute;left:1241px;top:643px;width:20px;height:20px;border-radius:10px;background:#0f7a2f"></div>
<div style="position:absolute;left:1242.75px;top:644.75px;width:16.5px;height:16.5px;border-radius:9px;background:#1cbf49"></div>
<div style="position:absolute;left:1198px;top:70.5px;width:35px;height:27px;background:#3f3e43"></div>
<svg style="position:absolute;left:1232px;top:88px" width="10" height="10"><path d="M0,4 L7,9.5 L0,9.5 Z" fill="#3f3e43"/></svg>
<div class="t" style="left:1207.30px;top:71.43px;font-size:10.6px;font-weight:normal;color:#1fb54d;-webkit-text-stroke:0">400</div>
<div class="t" style="left:1201.80px;top:85.23px;font-size:10.6px;font-weight:normal;color:#1fb54d;-webkit-text-stroke:0">80.00</div>
<div style="position:absolute;left:1201px;top:653px;width:32px;height:29px;background:#3f3e43"></div>
<svg style="position:absolute;left:1232px;top:653px" width="10" height="10"><path d="M0,0 L8,0 L0,6 Z" fill="#3f3e43"/></svg>
<div class="t" style="left:1216.20px;top:655.83px;font-size:10.6px;font-weight:normal;color:#1fb54d;-webkit-text-stroke:0">1</div>
<div class="t" style="left:1207.80px;top:668.43px;font-size:10.6px;font-weight:normal;color:#1fb54d;-webkit-text-stroke:0">0.20</div>
</body></html>
